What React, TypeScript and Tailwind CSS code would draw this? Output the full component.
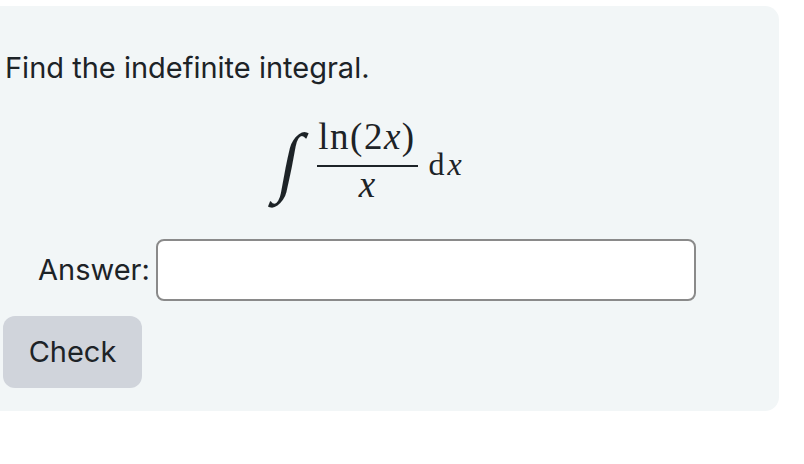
import React from "react";

export default function App() {
  const serif = { fontFamily: "'Liberation Serif', 'DejaVu Serif', serif" };
  return (
    <div className="w-[804px] h-[464px] bg-white pt-[6px]" style={{ fontFamily: "Inter, 'Liberation Sans', sans-serif" }}>
      <div className="w-[779px] h-[405px] bg-[#f2f6f7] rounded-r-[14px] text-[#1d2327] flex flex-col">
        <p className="pl-[5px] pt-[42px] text-[29px] leading-[40px]">Find the indefinite integral.</p>
        <div className="w-[740px] h-[100px] flex justify-center items-start mt-[26px]" style={serif}>
          <span className="w-[30px] h-[80px] mt-[8px] text-[70px] leading-[80px] inline-block scale-y-[1.1] -skew-x-12 translate-x-[2px] overflow-visible text-center font-light" style={serif}>∫</span>
          <span className="flex flex-col items-center ml-[14px]">
            <span className="text-[37px] leading-[46px] tracking-[1.5px] whitespace-nowrap">ln(2<i>x</i>)</span>
            <span className="block w-[101px] h-[2px] bg-[#1d2327] mt-[5px]"></span>
            <span className="text-[37px] leading-[30px] mt-[3px]"><i>x</i></span>
          </span>
          <span className="w-[39px] ml-[11px] mt-[35px] text-[32px] leading-[30px] tracking-[3px] whitespace-nowrap">d<i>x</i></span>
        </div>
        <div className="flex items-center mt-[25px] pl-[38px]">
          <span className="text-[29px] mr-[6px]">Answer:</span>
          <input className="w-[540px] h-[62px] bg-white border-2 border-[#8a8a8a] rounded-[8px]" />
        </div>
        <div className="pl-[3px] mt-[15px]">
          <button className="w-[139px] h-[72px] bg-[#d0d4db] rounded-[12px] text-[29px] text-[#1d2327]">Check</button>
        </div>
      </div>
    </div>
  );
}
